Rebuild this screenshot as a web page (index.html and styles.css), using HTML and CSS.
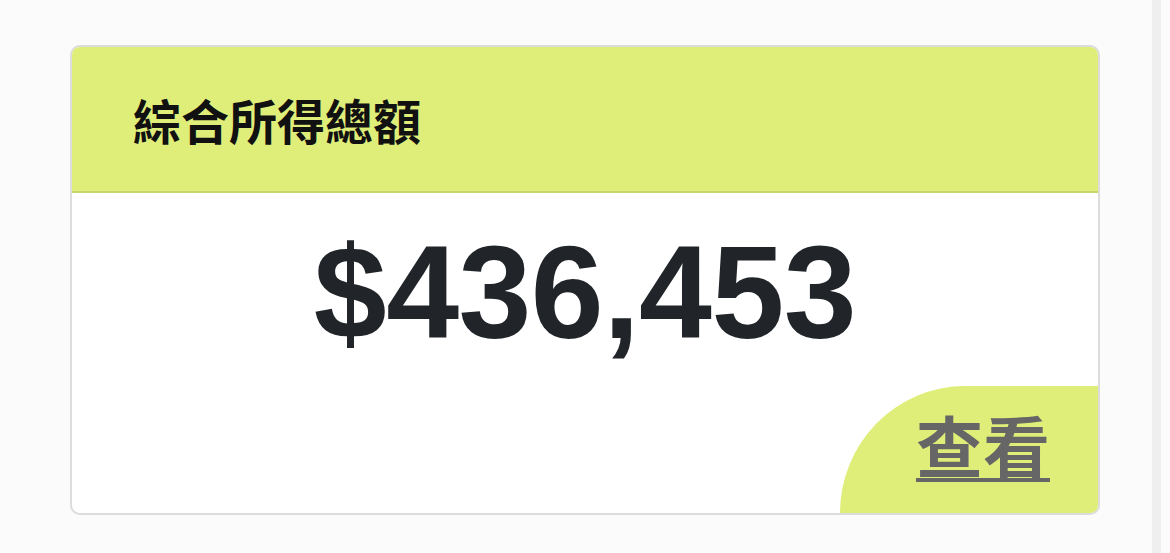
FILE: index.html
```html
<!DOCTYPE html>
<html lang="zh-Hant">
<head>
<meta charset="utf-8">
<link rel="stylesheet" href="styles.css">
</head>
<body>
<main class="page">
  <section class="card">
    <header class="card-header">
      <h2 class="card-title">綜合所得總額</h2>
    </header>
    <div class="card-body">
      <div class="amount">$436,453</div>
      <div class="card-footer">
        <a class="view-link" href="#">查看</a>
      </div>
    </div>
  </section>
</main>
<div class="scroll-strip"></div>
</body>
</html>
```
FILE: styles.css
```css
html, body {
  margin: 0;
  padding: 0;
  height: 100%;
}
body {
  display: flex;
  background: #fbfbfb;
  font-family: "Liberation Sans", "Noto Sans CJK TC", sans-serif;
}
.page {
  flex: 1;
  padding: 45px 0 0 70px;
}
.scroll-strip {
  width: 9px;
  margin-right: 9px;
  background: #efefef;
}
.card {
  width: 1026px;
  height: 466px;
  border: 2px solid #dcdcdc;
  border-radius: 10px;
  background: #ffffff;
  overflow: hidden;
  display: flex;
  flex-direction: column;
}
.card-header {
  height: 144px;
  background: #dfee79;
  border-bottom: 2px solid #c6d66a;
  display: flex;
  align-items: center;
  padding-left: 61px;
}
.card-title {
  margin: 0;
  font-family: "Noto Sans CJK TC", sans-serif;
  font-size: 48px;
  font-weight: 700;
  color: #111;
  line-height: 1;
}
.card-body {
  flex: 1;
  display: flex;
  flex-direction: column;
}
.amount {
  flex: 1;
  display: flex;
  align-items: center;
  justify-content: center;
  padding-top: 6px;
  font-family: "Liberation Sans", sans-serif;
  font-weight: 700;
  font-size: 131px;
  letter-spacing: -0.5px;
  color: #212529;
}
.card-footer {
  display: flex;
  justify-content: flex-end;
}
.view-link {
  width: 258px;
  height: 127px;
  box-sizing: border-box;
  background: #dfee79;
  border-top-left-radius: 125px 127px;
  display: flex;
  align-items: center;
  justify-content: flex-end;
  padding-right: 48px;
  padding-bottom: 12px;
  font-family: "Noto Sans CJK TC", sans-serif;
  font-size: 67px;
  font-weight: 700;
  color: #666;
  text-decoration: underline;
  text-decoration-thickness: 4px;
  text-underline-offset: 5px;
}
```
